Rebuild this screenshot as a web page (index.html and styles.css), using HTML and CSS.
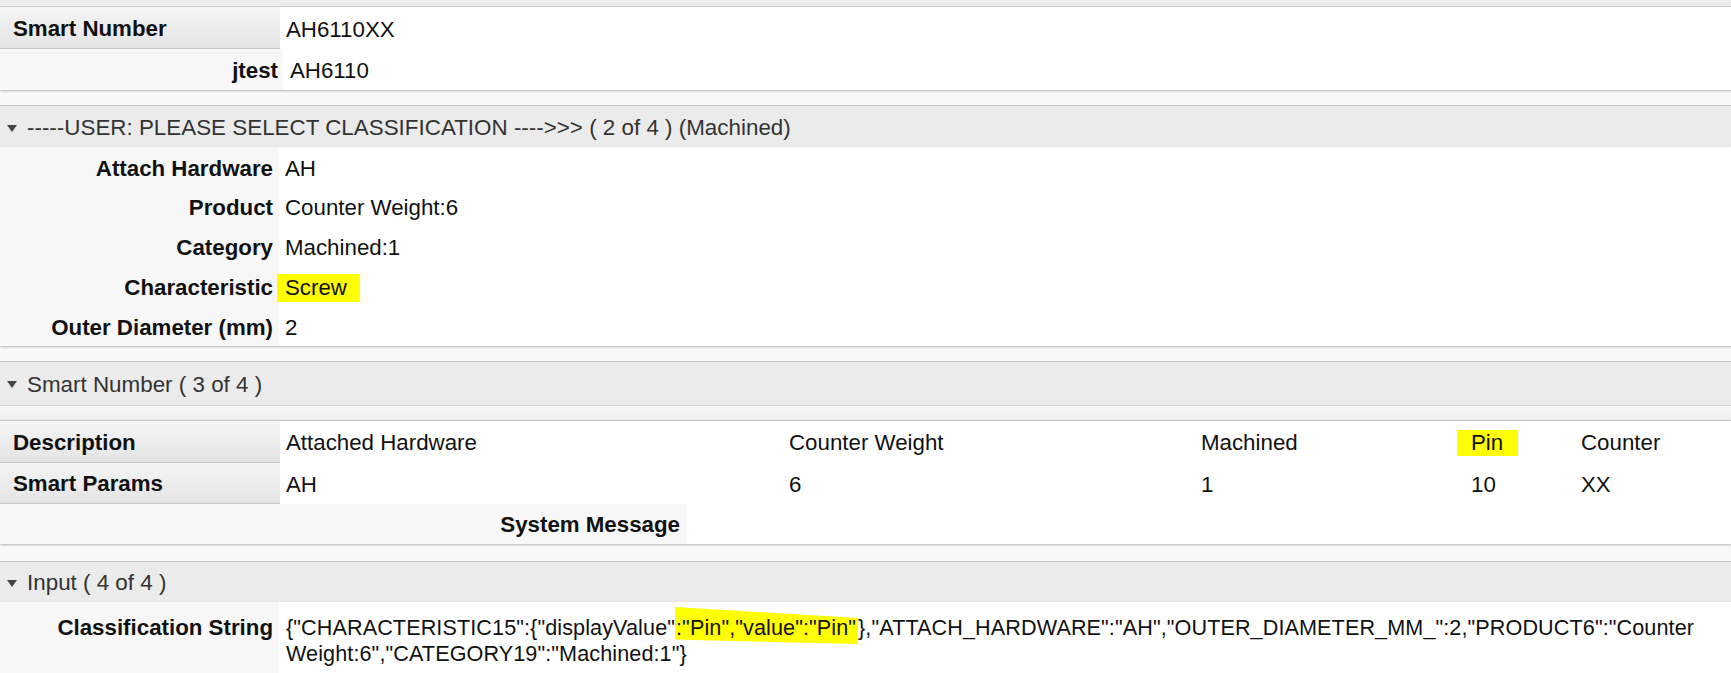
FILE: index.html
```html
<!DOCTYPE html>
<html>
<head>
<meta charset="utf-8">
<title>Smart Number</title>
<link rel="stylesheet" href="styles.css">
</head>
<body>
<div class="topband"></div>

<div class="box box-first">
  <div class="row row-42">
    <div class="lbl lbl-grad w280">Smart Number</div>
    <div class="val">AH6110XX</div>
  </div>
  <div class="row row-41">
    <div class="lbl lbl-right w283">jtest</div>
    <div class="val val-jtest">AH6110</div>
  </div>
</div>

<div class="ghead ghead-1">
  <svg class="tri" width="10" height="7" viewBox="0 0 10 7"><polygon points="0,0 10,0 5,7" fill="#444"/></svg>
  <span>-----USER: PLEASE SELECT CLASSIFICATION ----&gt;&gt;&gt; ( 2 of 4 ) (Machined)</span>
</div>
<div class="box box-class">
  <div class="row row-cls row-cls-first"><div class="lbl lbl-right w279">Attach Hardware</div><div class="val">AH</div></div>
  <div class="row row-cls"><div class="lbl lbl-right w279">Product</div><div class="val">Counter Weight:6</div></div>
  <div class="row row-cls"><div class="lbl lbl-right w279">Category</div><div class="val">Machined:1</div></div>
  <div class="row row-cls"><div class="lbl lbl-right w279">Characteristic</div><div class="val"><span class="hl hl-screw">Screw</span></div></div>
  <div class="row row-cls"><div class="lbl lbl-right w279">Outer Diameter (mm)</div><div class="val">2</div></div>
</div>

<div class="ghead ghead-2">
  <svg class="tri" width="10" height="7" viewBox="0 0 10 7"><polygon points="0,0 10,0 5,7" fill="#444"/></svg>
  <span>Smart Number ( 3 of 4 )</span>
</div>
<div class="spacer"></div>
<div class="box box-smart">
  <div class="grid-row row-42">
    <div class="lbl lbl-grad">Description</div>
    <div class="val">Attached Hardware</div>
    <div class="val">Counter Weight</div>
    <div class="val">Machined</div>
    <div class="val"><span class="hl hl-pin">Pin</span></div>
    <div class="val">Counter</div>
  </div>
  <div class="grid-row row-41">
    <div class="lbl lbl-grad">Smart Params</div>
    <div class="val">AH</div>
    <div class="val">6</div>
    <div class="val">1</div>
    <div class="val">10</div>
    <div class="val">XX</div>
  </div>
  <div class="row row-40">
    <div class="lbl lbl-right w687">System Message</div>
    <div class="val"></div>
  </div>
</div>

<div class="ghead ghead-3">
  <svg class="tri" width="10" height="7" viewBox="0 0 10 7"><polygon points="0,0 10,0 5,7" fill="#444"/></svg>
  <span>Input ( 4 of 4 )</span>
</div>
<div class="box box-input">
  <div class="row row-input">
    <div class="lbl lbl-right w279 lbl-top">Classification String</div>
    <div class="val val-json">{"CHARACTERISTIC15":{"displayValue"<span class="hl hl-json">:"Pin","value":"Pin"</span>},"ATTACH_HARDWARE":"AH","OUTER_DIAMETER_MM_":2,"PRODUCT6":"Counter Weight:6","CATEGORY19":"Machined:1"}</div>
  </div>
</div>
</body>
</html>
```

FILE: styles.css
```css
html, body {
  margin: 0;
  padding: 0;
}

body {
  background: #f8f8f8;
  font-family: "Liberation Sans", Arial, sans-serif;
  font-size: 22.3px;
  color: #111;
  overflow: hidden;
}

.topband {
  height: 6px;
  background: #ececec;
  border-bottom: 1px solid #cfcfcf;
}

.box {
  background: #fff;
  box-shadow: 0 1px 2px rgba(0, 0, 0, 0.28);
}

.box-first {
  margin-bottom: 15px;
}

.box-class {
  margin-bottom: 15px;
}

.box-smart {
  border-top: 1px solid #c9c9c9;
  margin-bottom: 17px;
}

.row {
  display: flex;
  align-items: stretch;
}

.row-42 { height: 42px; }
.row-41 { height: 41px; }
.row-40 { height: 40px; }
.row-cls { height: 39.8px; }

.row-cls-first .lbl,
.row-cls-first .val {
  padding-top: 5px;
}

.grid-row {
  display: grid;
  grid-template-columns: 280px 503px 412px 270px 110px 1fr;
}

.lbl {
  display: flex;
  align-items: center;
  font-weight: bold;
  color: #111;
  box-sizing: border-box;
  flex: none;
  padding-top: 3px;
}

.lbl-grad {
  background: linear-gradient(#f5f5f5, #e4e4e4);
  border-bottom: 1px solid #c8c8c8;
  padding-left: 13px;
}

.lbl-right {
  background: #f7f7f7;
  justify-content: flex-end;
  padding-right: 6px;
}

.lbl-top {
  align-items: flex-start;
  padding-top: 13px;
  line-height: 26px;
}

.w279 { width: 279px; }
.w280 { width: 280px; }
.w283 { width: 283px; padding-right: 5px; }
.w687 { width: 687px; padding-right: 7px; }

.val {
  display: flex;
  align-items: center;
  padding-left: 6px;
  padding-top: 3px;
  box-sizing: border-box;
  min-width: 0;
}

.val-jtest {
  padding-left: 7px;
}

.ghead {
  display: flex;
  align-items: center;
  background: #ebebeb;
  border-top: 1px solid #c6c6c6;
  color: #333;
  padding-left: 7px;
  padding-top: 3px;
  box-sizing: border-box;
  font-size: 22.4px;
}

.ghead-1 { height: 42px; }
.ghead-2 { height: 45px; border-bottom: 1px solid #d2d2d2; }
.ghead-3 { height: 41px; }

.tri {
  margin-right: 10px;
  flex: none;
}

.spacer {
  height: 14px;
  background: linear-gradient(#f7f7f7, #eeeeee);
}

.row-input {
  min-height: 80px;
}

.val-json {
  display: block;
  font-size: 21.6px;
  letter-spacing: 0.1px;
  line-height: 26px;
  padding-top: 13px;
  padding-left: 7px;
  padding-right: 0;
}

.hl {
  background: #ffff00;
}

.hl-screw {
  padding: 1px 13px 1px 8px;
  margin-left: -8px;
}

.hl-pin {
  padding: 0 15px 0 14px;
  margin-left: -14px;
}

.hl-json {
  padding: 8px 2px 4px 1px;
  clip-path: polygon(0 0, 100% 30%, 100% 100%, 0 88%);
}
```
